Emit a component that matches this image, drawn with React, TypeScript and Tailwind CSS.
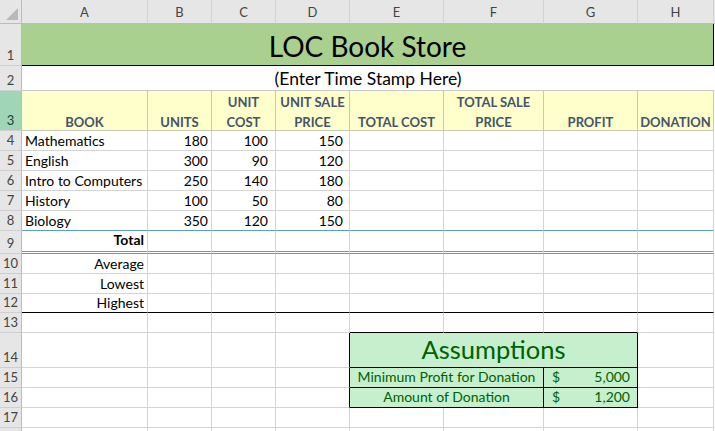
import React from "react";

const G = "border-r border-b border-[#d4d4d4]";
const RH =
  "bg-[#e6e6e6] border-r border-r-[#bcbcbc] border-b border-b-[#cfcfcf] flex items-end justify-center text-[13px] leading-none text-[#444] pb-[3px]";
const HDR =
  "bg-[#ffffcc] border-r border-b border-[#c9c9b8] flex flex-col items-center justify-end text-[13px] font-bold leading-[20px] text-[#44546a] whitespace-nowrap";
const TXT = "text-[14px] leading-none whitespace-nowrap";

const cols = ["A", "B", "C", "D", "E", "F", "G", "H"];

const data: [string, string, string, string][] = [
  ["Mathematics", "180", "100", "150"],
  ["English", "300", "90", "120"],
  ["Intro to Computers", "250", "140", "180"],
  ["History", "100", "50", "80"],
  ["Biology", "350", "120", "150"],
];

function H({ children }: { children: React.ReactNode }) {
  return <div className="flex flex-col items-center translate-y-[2px]">{children}</div>;
}

export default function App() {
  return (
    <div
      className="w-[715px] h-[431px] overflow-hidden bg-white text-black"
      style={{ fontFamily: "Lato, 'Open Sans', sans-serif" }}
    >
      <div className="grid grid-cols-[22px_126px_64px_64px_74px_94px_100px_94px_76px_1fr] grid-rows-[24px_42px_25px_40px_20px_20px_20px_20px_20px_23px_20px_20px_19px_20px_35px_20px_20px_20px_3px]">
        {/* column headers */}
        <div className="bg-[#e6e6e6] border-r border-b border-[#bcbcbc] relative">
          <svg className="absolute left-0 top-0" width="21" height="23" viewBox="0 0 21 23">
            <polygon points="18,8 18,20 6,20" fill="#b9b9b9" />
          </svg>
        </div>
        {cols.map((c) => (
          <div
            key={c}
            className="bg-[#e6e6e6] border-r border-r-[#d2d2d2] border-b border-b-[#bcbcbc] flex items-center justify-center text-[13px] text-[#444] pt-[2px]"
          >
            {c}
          </div>
        ))}
        <div className="bg-[#e6e6e6] border-b border-[#bcbcbc]" />

        {/* row 1 */}
        <div className={RH}>1</div>
        <div className="col-span-8 bg-[#a9d08e] border-r border-b border-black flex items-center justify-center text-[28px] leading-none pt-[3px]">
          LOC Book Store
        </div>
        <div />

        {/* row 2 */}
        <div className={RH}>2</div>
        <div className="col-span-8 border-b border-[#c8c8c8] flex items-end justify-center text-[17.5px] leading-none pb-[3px] whitespace-nowrap">
          (Enter Time Stamp Here)
        </div>
        <div />

        {/* row 3 */}
        <div className="bg-[#a0d6b8] border-r border-r-[#bcbcbc] border-b border-b-[#cfcfcf] flex items-end justify-center text-[13px] leading-none text-[#1e3f2f] pb-[3px]">
          3
        </div>
        <div className={HDR}><H>BOOK</H></div>
        <div className={HDR}><H>UNITS</H></div>
        <div className={HDR}>
          <H>
            <span>UNIT</span>
            <span>COST</span>
          </H>
        </div>
        <div className={HDR}>
          <H>
            <span>UNIT SALE</span>
            <span>PRICE</span>
          </H>
        </div>
        <div className={HDR}><H>TOTAL COST</H></div>
        <div className={HDR}>
          <H>
            <span>TOTAL SALE</span>
            <span>PRICE</span>
          </H>
        </div>
        <div className={HDR}><H>PROFIT</H></div>
        <div className={HDR}><H>DONATION</H></div>
        <div />

        {/* rows 4-8 */}
        {data.map((r, i) => {
          const last = i === data.length - 1;
          const b = last
            ? "border-r border-r-[#d4d4d4] border-b border-b-[#5b9bd5]"
            : G;
          return (
            <React.Fragment key={r[0]}>
              <div className={RH}>{i + 4}</div>
              <div className={`${b} ${TXT} flex items-end pl-[3px] pb-[2px]`}>{r[0]}</div>
              <div className={`${b} ${TXT} flex items-end justify-end pr-[3px] pb-[2px]`}>{r[1]}</div>
              <div className={`${b} ${TXT} flex items-end justify-end pr-[7px] pb-[2px]`}>{r[2]}</div>
              <div className={`${b} ${TXT} flex items-end justify-end pr-[6px] pb-[2px]`}>{r[3]}</div>
              <div className={b} />
              <div className={b} />
              <div className={b} />
              <div className={b} />
              <div />
            </React.Fragment>
          );
        })}

        {/* row 9 */}
        <div className={RH}>9</div>
        <div className={`border-r border-r-[#d4d4d4] border-b-[3px] border-double border-b-[#5b9bd5] ${TXT} font-bold flex items-end justify-end pr-[3px] pb-[4px]`}>
          Total
        </div>
        {[0, 1, 2, 3, 4, 5, 6].map((k) => (
          <div key={k} className="border-r border-r-[#d4d4d4] border-b-[3px] border-double border-b-[#5b9bd5]" />
        ))}
        <div />

        {/* rows 10-12 */}
        {["Average", "Lowest", "Highest"].map((t, i) => {
          const b = i === 2 ? "border-r border-r-[#d4d4d4] border-b border-b-black" : G;
          return (
            <React.Fragment key={t}>
              <div className={RH}>{i + 10}</div>
              <div className={`${b} ${TXT} flex items-end justify-end pr-[3px] pb-[2px]`}>{t}</div>
              <div className={b} />
              <div className={b} />
              <div className={b} />
              <div className={b} />
              <div className={b} />
              <div className={b} />
              <div className={b} />
              <div />
            </React.Fragment>
          );
        })}

        {/* row 13 */}
        <div className={RH}>13</div>
        <div className={G} />
        <div className={G} />
        <div className={G} />
        <div className={G} />
        <div className="border-r border-r-[#d4d4d4] border-b border-b-black" />
        <div className="border-r border-r-[#d4d4d4] border-b border-b-black" />
        <div className="border-r border-r-[#d4d4d4] border-b border-b-black" />
        <div className={G} />
        <div />

        {/* row 14 */}
        <div className={RH}>14</div>
        <div className={G} />
        <div className={G} />
        <div className={G} />
        <div className="border-r border-r-black border-b border-b-[#d4d4d4]" />
        <div className="col-span-3 bg-[#c6efce] border-r border-b border-black flex items-end justify-center text-[25.5px] leading-none text-[#006100] pb-[5px]">
          Assumptions
        </div>
        <div className={G} />
        <div />

        {/* rows 15-16 */}
        {[
          ["Minimum Profit for Donation", "5,000"],
          ["Amount of Donation", "1,200"],
        ].map(([label, val], i) => (
          <React.Fragment key={label}>
            <div className={RH}>{i + 15}</div>
            <div className={G} />
            <div className={G} />
            <div className={G} />
            <div className="border-r border-r-black border-b border-b-[#d4d4d4]" />
            <div className="col-span-2 bg-[#c6efce] border-r border-b border-black flex items-end justify-center text-[14px] leading-none text-[#006100] pb-[3px] whitespace-nowrap">
              {label}
            </div>
            <div className="bg-[#c6efce] border-r border-b border-black flex items-end justify-between text-[14px] leading-none text-[#006100] pl-[8px] pr-[7px] pb-[3px]">
              <span>$</span>
              <span>{val}</span>
            </div>
            <div className={G} />
            <div />
          </React.Fragment>
        ))}

        {/* row 17 */}
        <div className={RH}>17</div>
        {[0, 1, 2, 3, 4, 5, 6, 7].map((k) => (
          <div key={k} className={G} />
        ))}
        <div />

        {/* partial row 18 */}
        <div className="bg-[#e6e6e6] border-r border-[#bcbcbc]" />
        {[0, 1, 2, 3, 4, 5, 6, 7].map((k) => (
          <div key={k} className="border-r border-[#d4d4d4]" />
        ))}
        <div />
      </div>
    </div>
  );
}
